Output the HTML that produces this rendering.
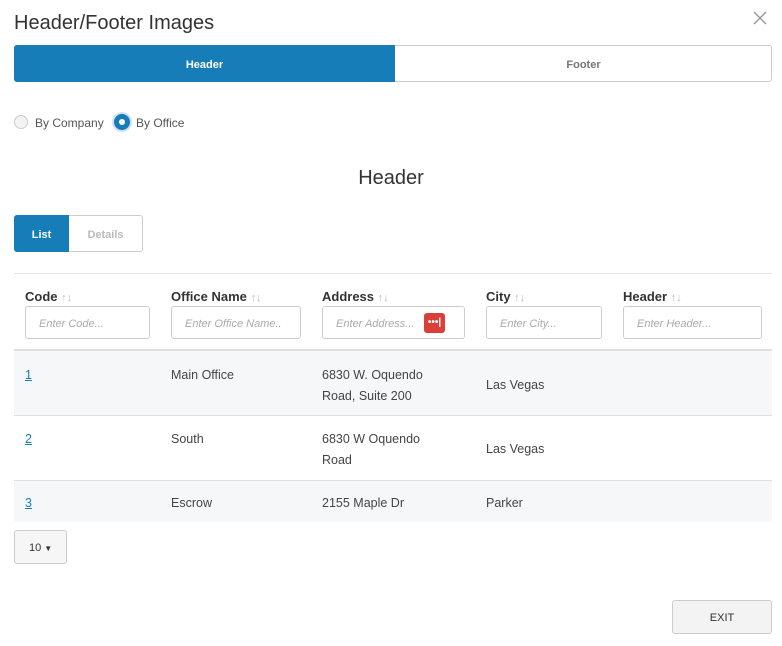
<!DOCTYPE html>
<html><head><style>
body{margin:0;width:782px;height:646px;background:#fff;font-family:"Liberation Sans",sans-serif;color:#333;position:relative;overflow:hidden}
.a{position:absolute}
.inp{position:absolute;top:306px;height:33px;border:1px solid #ccc;border-radius:3px;box-sizing:border-box;font-size:11px;font-style:italic;color:#aaa;padding:11px 0 0 13px}
.th{position:absolute;top:289px;font-size:13px;font-weight:bold;color:#333}
.th span{color:#bbb;font-weight:normal;font-size:11px}
.td{position:absolute;font-size:12.5px;color:#444;line-height:21px}
a{color:#167db8;text-decoration:underline}
</style></head><body>
<div class="a" style="left:14px;top:12px;font-size:20px;color:#333">Header/Footer Images</div>
<svg class="a" style="left:753px;top:11px" width="14" height="14"><path d="M1 1L13 13M13 1L1 13" stroke="#999" stroke-width="1.5"/></svg>
<div class="a" style="left:14px;top:45px;width:758px;height:37px;border:1px solid #ccc;border-radius:3px;box-sizing:border-box"></div>
<div class="a" style="left:14px;top:45px;width:381px;height:37px;background:#167db8;border-radius:3px 0 0 3px;color:#fff;font-size:11px;font-weight:bold;text-align:center;line-height:40px">Header</div>
<div class="a" style="left:395px;top:45px;width:377px;height:37px;color:#777;font-size:11px;font-weight:bold;text-align:center;line-height:40px">Footer</div>
<div class="a" style="left:14px;top:115px;width:14px;height:14px;border:1px solid #ccc;border-radius:50%;background:#f3f3f3;box-sizing:border-box"></div>
<div class="a" style="left:35px;top:116px;font-size:12px;color:#555">By Company</div>
<div class="a" style="left:114px;top:114px;width:16px;height:16px;border-radius:50%;background:#167db8;box-shadow:0 0 0 2px #cfe3f3"></div>
<div class="a" style="left:119px;top:119px;width:6px;height:6px;border-radius:50%;background:#fff"></div>
<div class="a" style="left:136px;top:116px;font-size:12px;color:#555">By Office</div>
<div class="a" style="left:0;width:782px;top:167px;text-align:center;font-size:20px;color:#333">Header</div>
<div class="a" style="left:14px;top:215px;width:129px;height:37px;border:1px solid #ccc;border-radius:3px;box-sizing:border-box"></div>
<div class="a" style="left:14px;top:215px;width:55px;height:37px;background:#167db8;border-radius:3px 0 0 3px;color:#fff;font-size:11px;font-weight:bold;text-align:center;line-height:40px">List</div>
<div class="a" style="left:69px;top:215px;width:73px;height:37px;color:#bbb;font-size:11px;font-weight:bold;text-align:center;line-height:40px">Details</div>
<div class="a" style="left:14px;top:273px;width:758px;height:1px;background:#e3e3e3"></div>
<div class="th" style="left:25px">Code <span>↑↓</span></div>
<div class="th" style="left:171px">Office Name <span>↑↓</span></div>
<div class="th" style="left:322px">Address <span>↑↓</span></div>
<div class="th" style="left:486px">City <span>↑↓</span></div>
<div class="th" style="left:623px">Header <span>↑↓</span></div>
<div class="inp" style="left:25px;width:125px">Enter Code...</div>
<div class="inp" style="left:171px;width:130px">Enter Office Name..</div>
<div class="inp" style="left:322px;width:143px">Enter Address...</div>
<div class="a" style="left:424px;top:313px;width:21px;height:20px;background:#d9403a;border-radius:3px;color:#fff;font-size:10px;text-align:center;line-height:20px;font-weight:bold">•••|</div>
<div class="inp" style="left:486px;width:116px">Enter City...</div>
<div class="inp" style="left:623px;width:139px">Enter Header...</div>
<div class="a" style="left:14px;top:349px;width:758px;height:2px;background:#dde0e4"></div>
<div class="a" style="left:14px;top:351px;width:758px;height:64px;background:#f6f7f9;border-bottom:1px solid #dde0e4"></div>
<div class="a" style="left:14px;top:480px;width:758px;height:41px;background:#f6f7f9;border-top:1px solid #dde0e4"></div>
<div class="td" style="left:25px;top:365px"><a>1</a></div>
<div class="td" style="left:171px;top:365px">Main Office</div>
<div class="td" style="left:322px;top:365px">6830 W. Oquendo<br>Road, Suite 200</div>
<div class="td" style="left:486px;top:375px">Las Vegas</div>
<div class="td" style="left:25px;top:429px"><a>2</a></div>
<div class="td" style="left:171px;top:429px">South</div>
<div class="td" style="left:322px;top:429px">6830 W Oquendo<br>Road</div>
<div class="td" style="left:486px;top:439px">Las Vegas</div>
<div class="td" style="left:25px;top:493px"><a>3</a></div>
<div class="td" style="left:171px;top:493px">Escrow</div>
<div class="td" style="left:322px;top:493px">2155 Maple Dr</div>
<div class="td" style="left:486px;top:493px">Parker</div>
<div class="a" style="left:14px;top:530px;width:53px;height:34px;border:1px solid #ccc;border-radius:3px;background:#f6f6f6;box-sizing:border-box;font-size:11px;color:#333;line-height:34px;padding-left:14px">10 <span style="font-size:8px">▼</span></div>
<div class="a" style="left:672px;top:600px;width:100px;height:34px;border:1px solid #ccc;border-radius:3px;background:#f3f3f3;box-sizing:border-box;font-size:11px;color:#333;text-align:center;line-height:34px">EXIT</div>
</body></html>
